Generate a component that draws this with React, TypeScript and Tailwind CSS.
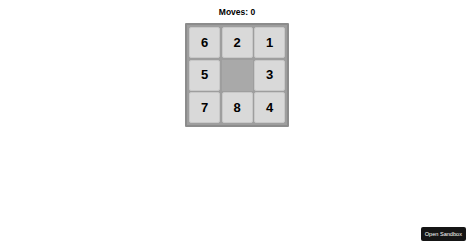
import React from "react";

const tiles = [6, 2, 1, 5, 0, 3, 7, 8, 4];

export default function App() {
  return (
    <div className="min-h-[248px] w-full bg-white" style={{ fontFamily: '"Liberation Sans", Arial, sans-serif' }}>
      <div className="flex flex-col items-center pt-[7px]">
        <div className="text-[8.5px] font-bold leading-[10px] text-black">Moves: 0</div>
        <div className="mt-[6px] rounded-[1px] border-[2px] border-[#8c8c8c] bg-[#9e9e9e] p-[2px]">
          <div className="grid grid-cols-[repeat(3,31px)] gap-[1.5px]">
            {tiles.map((t, i) =>
              t === 0 ? (
                <div key={i} className="h-[31px] w-[31px] bg-[#a9a9a9]" />
              ) : (
                <div
                  key={i}
                  className="flex h-[31px] w-[31px] items-center justify-center rounded-[2px] border border-[#c8c8c8] bg-[#d9d9d9] text-[13px] font-bold text-black"
                >
                  {t}
                </div>
              )
            )}
          </div>
        </div>
      </div>
      <div className="fixed bottom-[7px] right-[8px] flex h-[14px] items-center rounded-[2px] bg-[#151515] px-[4px] text-[5.6px] text-white">
        Open Sandbox
      </div>
    </div>
  );
}
